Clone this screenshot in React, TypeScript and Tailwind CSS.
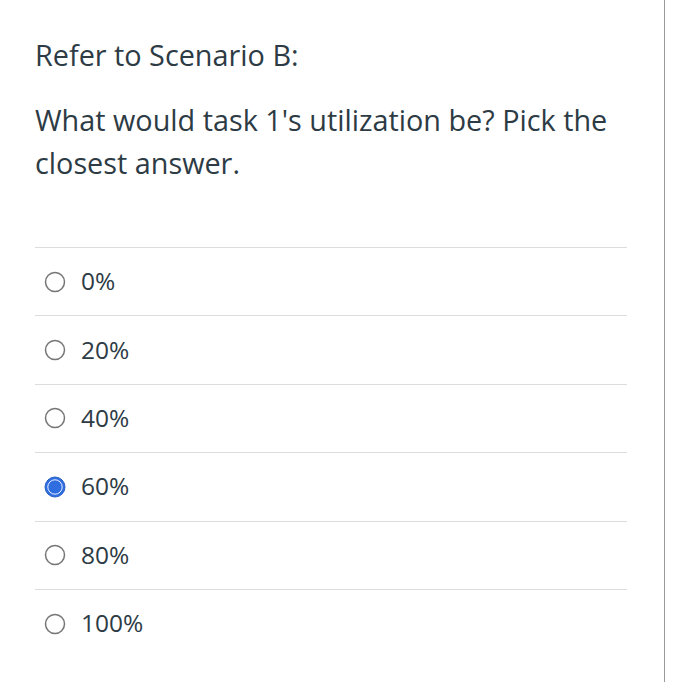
const options = ["0%", "20%", "40%", "60%", "80%", "100%"];
const selected = "60%";

const Radio = ({ checked }: { checked: boolean }) =>
  checked ? (
    <svg width="22" height="22" viewBox="0 0 22 22">
      <circle cx="11" cy="11" r="10" fill="#2f6ee0" stroke="#2a5fc4" strokeWidth="1" />
      <circle cx="11" cy="11" r="7.2" fill="none" stroke="#ffffff" strokeWidth="1" strokeOpacity="0.9" />
    </svg>
  ) : (
    <svg width="22" height="22" viewBox="0 0 22 22">
      <circle cx="11" cy="11" r="9.5" fill="#ffffff" stroke="#767676" strokeWidth="1.5" />
    </svg>
  );

export default function App() {
  return (
    <div className="flex min-h-[682px] bg-white">
      <div className="w-[665px] border-r-[1.5px] border-[#9a9a9a] pl-[35px] pr-[37px] pt-[33px]">
        <div className="font-['Open_Sans',sans-serif] text-[28.8px] leading-[43px] text-[#2d3b45]">
          <p>Refer to Scenario B:</p>
          <p className="mt-[22px]">What would task 1's utilization be? Pick the closest answer.</p>
        </div>
        <ul className="mt-[63px] font-['Open_Sans',sans-serif] text-[24.5px] text-[#2d3b45]">
          {options.map((o) => (
            <li key={o} className="flex h-[68.4px] items-center gap-[15px] border-t border-[#dcdcdc] pl-[9px]">
              <Radio checked={o === selected} />
              <span>{o}</span>
            </li>
          ))}
        </ul>
      </div>
    </div>
  );
}
